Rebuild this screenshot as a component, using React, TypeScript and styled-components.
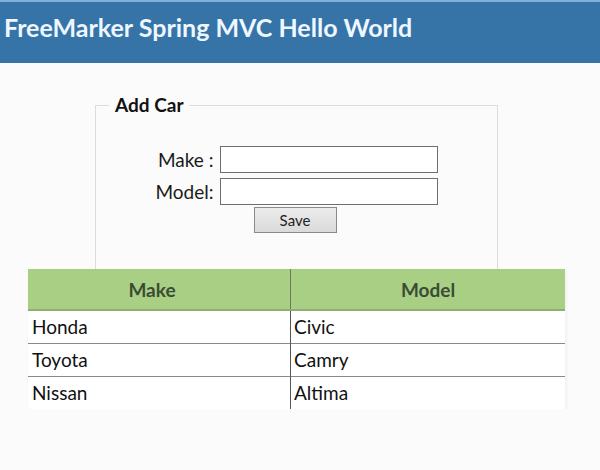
import React from "react"
import styled, { createGlobalStyle } from "styled-components"

type Car = {
    make: string
    model: string
}

const cars: Car[] = [
    { make: "Honda", model: "Civic" },
    { make: "Toyota", model: "Camry" },
    { make: "Nissan", model: "Altima" },
]

const GlobalStyle = createGlobalStyle`
    body {
        margin: 0;
        background: #fbfbfb;
        font-family: Lato, "Open Sans", sans-serif;
        color: #111;
    }
`

export default function App() {
    return (
        <>
            <GlobalStyle />
            <Header>
                <Title>FreeMarker Spring MVC Hello World</Title>
            </Header>
            <Main>
                <Fieldset>
                    <Legend>Add Car</Legend>
                    <Form onSubmit={(e) => e.preventDefault()}>
                        <Label htmlFor="make">Make :</Label>
                        <Input id="make" type="text" />
                        <Label htmlFor="model">Model:</Label>
                        <Input id="model" type="text" />
                        <Button type="submit">Save</Button>
                    </Form>
                </Fieldset>
                <Table>
                    <thead>
                        <tr>
                            <Th>Make</Th>
                            <Th>Model</Th>
                        </tr>
                    </thead>
                    <tbody>
                        {cars.map((car) => (
                            <Row key={car.make}>
                                <Td>{car.make}</Td>
                                <Td>{car.model}</Td>
                            </Row>
                        ))}
                    </tbody>
                </Table>
            </Main>
        </>
    )
}

const Header = styled.header`
    height: 63px;
    background: #3674a8;
    border-top: 2px solid #7fb0d6;
    box-sizing: border-box;
    padding: 11px 0 0 4px;
`
const Title = styled.h1`
    margin: 0;
    font-size: 25px;
    font-weight: 700;
    color: #eef7ff;
    line-height: 28px;
`
const Main = styled.main`
    padding-top: 31px;
`
const Fieldset = styled.fieldset`
    margin: 0 0 0 95px;
    width: 403px;
    box-sizing: border-box;
    padding: 0 0 36px;
    border: 1px solid #dcdcdc;
    border-bottom: none;
`
const Legend = styled.legend`
    margin-left: 13px;
    padding: 0 6px;
    font-size: 19px;
    font-weight: 700;
    line-height: 22px;
    color: #111;
`
const Form = styled.form`
    display: grid;
    grid-template-columns: auto 218px;
    justify-content: center;
    align-items: center;
    column-gap: 6px;
    row-gap: 5px;
    padding-top: 30px;
`
const Label = styled.label`
    font-size: 19px;
    text-align: right;
    color: #1a1a1a;
`
const Input = styled.input`
    height: 27px;
    box-sizing: border-box;
    border: 1px solid #6e6e6e;
    background: #fff;
    margin: 0;
`
const Button = styled.button`
    grid-column: 1 / -1;
    justify-self: center;
    margin: -3px 0 0 -3px;
    width: 83px;
    height: 26px;
    border: 1px solid #8a8a8a;
    background: linear-gradient(#ececec, #dadada);
    font-family: Lato, "Open Sans", sans-serif;
    font-size: 15px;
    color: #222;
`
const Table = styled.table`
    margin-left: 28px;
    width: 537px;
    border-collapse: collapse;
    font-size: 19px;
    box-shadow: 1px 2px 4px rgba(0, 0, 0, 0.06);
`
const Th = styled.th`
    height: 40px;
    background: #a8cf84;
    color: #3c4c34;
    font-weight: 700;
    font-size: 19px;
    border-bottom: 2px solid #8fae72;
    padding: 0;
    &:first-child {
        width: 262px;
        border-right: 1px solid #6a7a60;
        text-indent: -14px;
    }
`
const Row = styled.tr`
    height: 33px;
    background: #fff;
    border-bottom: 1px solid #8a8a8a;
    &:last-child {
        border-bottom: none;
    }
`
const Td = styled.td`
    padding: 0 0 0 4px;
    &:first-child {
        border-right: 1px solid #555;
    }
    &:last-child {
        padding-left: 3px;
    }
`
